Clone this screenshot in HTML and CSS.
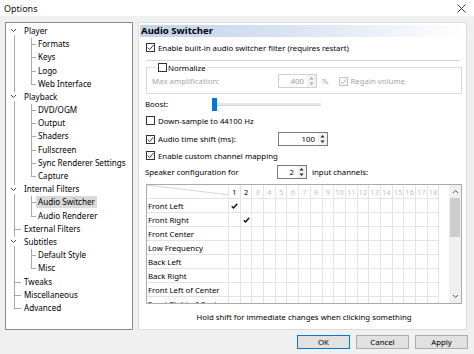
FILE: index.html
```html
<!DOCTYPE html>
<html lang="en">
<head>
    <meta charset="UTF-8">
    <title>Options</title>
    <link rel="stylesheet" href="styles.css">
</head>
<body>
    <div class="titlebar">
        <span class="title">Options</span>
        <svg class="close" width="9" height="9" viewBox="0 0 9 9"><path d="M0.5 0.5L8.5 8.5M8.5 0.5L0.5 8.5" stroke="#222" stroke-width="0.9"/></svg>
    </div>

    <div class="main">
        <div class="tree">
            <div class="branch">
                <div class="node">
                    <div class="row"><span class="chev"><svg width="7" height="5" viewBox="0 0 7 5"><path d="M1 1L3.5 3.5L6 1" fill="none" stroke="#444"/></svg></span><span class="label">Player</span></div>
                    <div class="kids">
                        <div class="row"><span class="label">Formats</span></div>
                        <div class="row"><span class="label">Keys</span></div>
                        <div class="row"><span class="label">Logo</span></div>
                        <div class="row"><span class="label">Web Interface</span></div>
                    </div>
                </div>
                <div class="node">
                    <div class="row"><span class="chev"><svg width="7" height="5" viewBox="0 0 7 5"><path d="M1 1L3.5 3.5L6 1" fill="none" stroke="#444"/></svg></span><span class="label">Playback</span></div>
                    <div class="kids">
                        <div class="row"><span class="label">DVD/OGM</span></div>
                        <div class="row"><span class="label">Output</span></div>
                        <div class="row"><span class="label">Shaders</span></div>
                        <div class="row"><span class="label">Fullscreen</span></div>
                        <div class="row"><span class="label">Sync Renderer Settings</span></div>
                        <div class="row"><span class="label">Capture</span></div>
                    </div>
                </div>
                <div class="node">
                    <div class="row"><span class="chev"><svg width="7" height="5" viewBox="0 0 7 5"><path d="M1 1L3.5 3.5L6 1" fill="none" stroke="#444"/></svg></span><span class="label">Internal Filters</span></div>
                    <div class="kids">
                        <div class="row"><span class="label selected">Audio Switcher</span></div>
                        <div class="row"><span class="label">Audio Renderer</span></div>
                    </div>
                </div>
                <div class="node leaf">
                    <div class="row"><span class="label">External Filters</span></div>
                </div>
                <div class="node">
                    <div class="row"><span class="chev"><svg width="7" height="5" viewBox="0 0 7 5"><path d="M1 1L3.5 3.5L6 1" fill="none" stroke="#444"/></svg></span><span class="label">Subtitles</span></div>
                    <div class="kids">
                        <div class="row"><span class="label">Default Style</span></div>
                        <div class="row"><span class="label">Misc</span></div>
                    </div>
                </div>
                <div class="node leaf">
                    <div class="row"><span class="label">Tweaks</span></div>
                </div>
                <div class="node leaf">
                    <div class="row"><span class="label">Miscellaneous</span></div>
                </div>
                <div class="node leaf">
                    <div class="row"><span class="label">Advanced</span></div>
                </div>
            </div>
        </div>

        <div class="page">
            <div class="page-title">Audio Switcher</div>
            <div class="page-body">
                <div class="line first">
                    <svg class="cb" viewBox="0 0 9 9"><rect x="0.5" y="0.5" width="8" height="8" fill="#fff" stroke="#333"/><path d="M1.8 4.6L3.7 6.6L7.4 2.2" fill="none" stroke="#333"/></svg>
                    <span>Enable built-in audio switcher filter (requires restart)</span>
                </div>
                <div class="separator"></div>

                <div class="group">
                    <div class="legend">
                        <svg class="cb" viewBox="0 0 9 9"><rect x="0.5" y="0.5" width="8" height="8" fill="#fff" stroke="#333"/></svg>
                        <span>Normalize</span>
                    </div>
                    <div class="group-row">
                        <span class="disabled amp-label">Max amplification:</span>
                        <span class="spin spin-400 off">
                            <span class="spin-val">400</span>
                            <span class="spin-btns">
                                <svg viewBox="0 0 8 6"><path d="M2 4.5L4 2L6 4.5Z" fill="#aaa"/></svg>
                                <svg viewBox="0 0 8 6"><path d="M2 1.5L4 4L6 1.5Z" fill="#aaa"/></svg>
                            </span>
                        </span>
                        <span class="disabled pct">%</span>
                        <span class="regain">
                            <svg class="cb" viewBox="0 0 9 9"><rect x="0.5" y="0.5" width="8" height="8" fill="#fff" stroke="#c4c4c4"/><path d="M1.8 4.6L3.7 6.6L7.4 2.2" fill="none" stroke="#b0b0b0"/></svg>
                            <span class="disabled">Regain volume</span>
                        </span>
                    </div>
                </div>

                <div class="line boost">
                    <span class="boost-label">Boost:</span>
                    <span class="slider"><span class="thumb"></span><span class="track"></span></span>
                </div>

                <div class="line down">
                    <svg class="cb" viewBox="0 0 9 9"><rect x="0.5" y="0.5" width="8" height="8" fill="#fff" stroke="#333"/></svg>
                    <span>Down-sample to 44100 Hz</span>
                </div>

                <div class="line shift">
                    <svg class="cb" viewBox="0 0 9 9"><rect x="0.5" y="0.5" width="8" height="8" fill="#fff" stroke="#333"/><path d="M1.8 4.6L3.7 6.6L7.4 2.2" fill="none" stroke="#333"/></svg>
                    <span class="shift-label">Audio time shift (ms):</span>
                    <span class="spin spin-100">
                        <span class="spin-val">100</span>
                        <span class="spin-btns">
                            <svg viewBox="0 0 8 6"><path d="M2 4.5L4 2L6 4.5Z" fill="#222"/></svg>
                            <svg viewBox="0 0 8 6"><path d="M2 1.5L4 4L6 1.5Z" fill="#222"/></svg>
                        </span>
                    </span>
                </div>

                <div class="line mapping">
                    <svg class="cb" viewBox="0 0 9 9"><rect x="0.5" y="0.5" width="8" height="8" fill="#fff" stroke="#333"/><path d="M1.8 4.6L3.7 6.6L7.4 2.2" fill="none" stroke="#333"/></svg>
                    <span>Enable custom channel mapping</span>
                </div>

                <div class="line speakers">
                    <span class="speaker-label">Speaker configuration for</span>
                    <span class="spin spin-2">
                        <span class="spin-val">2</span>
                        <span class="spin-btns">
                            <svg viewBox="0 0 8 6"><path d="M2 4.5L4 2L6 4.5Z" fill="#222"/></svg>
                            <svg viewBox="0 0 8 6"><path d="M2 1.5L4 4L6 1.5Z" fill="#222"/></svg>
                        </span>
                    </span>
                    <span class="channels">input channels:</span>
                </div>

                <div class="grid-box">
                    <div class="grid">
                        <div class="cell corner"><svg width="100%" height="100%" viewBox="0 0 100 100" preserveAspectRatio="none"><path d="M0 0L100 75" stroke="#d6d6d6" stroke-width="1" vector-effect="non-scaling-stroke"/></svg></div>
                        <div class="cell head on">1</div><div class="cell head on">2</div>
                        <div class="cell head">3</div><div class="cell head">4</div><div class="cell head">5</div>
                        <div class="cell head">6</div><div class="cell head">7</div><div class="cell head">8</div>
                        <div class="cell head">9</div><div class="cell head">10</div><div class="cell head">11</div>
                        <div class="cell head">12</div><div class="cell head">13</div><div class="cell head">14</div>
                        <div class="cell head">15</div><div class="cell head">16</div><div class="cell head">17</div>
                        <div class="cell head">18</div>
                    </div>
                    <div class="vscroll">
                        <span class="arrow"><svg width="7" height="5" viewBox="0 0 7 5"><path d="M1 4L3.5 1.5L6 4" fill="none" stroke="#555"/></svg></span>
                        <span class="scroll-thumb"></span>
                        <span class="scroll-gap"></span>
                        <span class="arrow"><svg width="7" height="5" viewBox="0 0 7 5"><path d="M1 1L3.5 3.5L6 1" fill="none" stroke="#555"/></svg></span>
                    </div>
                </div>

                <div class="hint">Hold shift for immediate changes when clicking something</div>
            </div>
        </div>
    </div>

    <div class="buttons">
        <button class="btn default">OK</button>
        <button class="btn">Cancel</button>
        <button class="btn">Apply</button>
    </div>

    <script>
        const rows = ["Front Left", "Front Right", "Front Center", "Low Frequency", "Back Left",
                      "Back Right", "Front Left of Center", "Front Right of Center"];
        const grid = document.querySelector(".grid");
        const check = '<svg width="7" height="6" viewBox="0 0 7 6"><path d="M0.8 3.2L2.6 5L6.2 0.8" fill="none" stroke="#111" stroke-width="1.4"/></svg>';
        rows.forEach((name, r) => {
            const label = document.createElement("div");
            label.className = "cell row-name";
            label.textContent = name;
            grid.appendChild(label);
            for (let c = 0; c < 18; c++) {
                const cell = document.createElement("div");
                cell.className = "cell";
                if (r < 2 && c === r) cell.innerHTML = check;
                grid.appendChild(cell);
            }
        });
    </script>
</body>
</html>
```

FILE: styles.css
```css
body {
    margin: 0;
    width: 474px;
    height: 354px;
    overflow: hidden;
    background-color: #f0f0f0;
    font-family: "Noto Sans", "Open Sans", sans-serif;
    font-size: 7.8px;
    color: #000;
}
.titlebar {
    height: 16px;
    background: #fff;
    display: flex;
    align-items: center;
    justify-content: space-between;
    padding: 0 8px 0 4px;
}
.title {
    font-size: 9px;
    color: #111;
}
.close {
    display: block;
}
.main {
    display: flex;
    gap: 5px;
    padding: 6px 7px 0 5px;
    height: 308px;
}

/* tree */
.tree {
    width: 128px;
    box-sizing: border-box;
    border: 1px solid #8c8c8c;
    background: #fff;
    padding-top: 1.4px;
    font-size: 8.1px;
}
.branch, .kids, .row {
    position: relative;
}
.branch::before {
    content: '';
    position: absolute;
    left: 8px;
    top: 6.6px;
    bottom: 6.6px;
    border-left: 1px solid #a8a8a8;
}
.row {
    height: 13.2px;
    display: flex;
    align-items: center;
    padding-left: 18px;
    white-space: nowrap;
}
.leaf > .row::before {
    content: '';
    position: absolute;
    left: 8px;
    width: 7px;
    top: 50%;
    border-top: 1px solid #a8a8a8;
}
.chev {
    position: absolute;
    left: 3px;
    top: 2px;
    width: 9px;
    height: 9px;
    background: #fff;
    display: flex;
    align-items: center;
    justify-content: center;
}
.kids::before {
    content: '';
    position: absolute;
    left: 25px;
    top: 0;
    bottom: 6.6px;
    border-left: 1px solid #a8a8a8;
}
.kids .row {
    padding-left: 30px;
}
.kids .row::before {
    content: '';
    position: absolute;
    left: 25px;
    width: 5px;
    top: 50%;
    border-top: 1px solid #a8a8a8;
}
.label {
    padding: 0 2px;
    line-height: 12px;
}
.row > .label {
    margin-left: -2px;
}
.kids .row > .label {
    margin-left: 0;
}
.selected {
    background: #d9d9d9;
}

/* page */
.page {
    flex: 1;
    box-sizing: border-box;
    background: #fff;
    border: 1px solid #dcdcdc;
    padding: 2px 1px 0 1px;
}
.page-title {
    height: 12px;
    line-height: 12px;
    padding-left: 1px;
    font-size: 9.6px;
    font-weight: bold;
    background: linear-gradient(to right, #c2d3ea, #d8e3f2 45%, #fbfcfe 95%, #fff);
}
.page-body {
    padding: 0 3px 0 6px;
}
.line {
    display: flex;
    align-items: center;
    height: 13px;
    white-space: nowrap;
}
.cb {
    width: 9px;
    height: 9px;
    flex-shrink: 0;
    margin-right: 3px;
}
.first {
    margin-top: 4px;
}
.separator {
    margin: 6px 2px 0 0;
    border-top: 1px solid #d4d4d4;
}
.group {
    margin-top: 6px;
    border: 1px solid #dcdcdc;
    padding-bottom: 5px;
}
.legend {
    display: flex;
    align-items: center;
    width: max-content;
    height: 13px;
    margin: -7px 0 0 9px;
    padding: 0 2px;
    background: #fff;
}
.legend .cb {
    margin-right: 1px;
}
.group-row {
    display: flex;
    align-items: center;
    height: 14px;
    padding-left: 5px;
}
.disabled {
    color: #a6a6a6;
}
.amp-label {
    width: 126px;
}
.pct {
    margin-left: 5px;
}
.regain {
    display: flex;
    align-items: center;
    margin-left: 11px;
}
.regain .cb {
    margin-right: 2px;
}

.spin {
    display: flex;
    height: 14px;
    box-sizing: border-box;
    border: 1px solid #7a7a7a;
    background: #fff;
}
.spin.off {
    border-color: #d0d0d0;
    color: #9a9a9a;
}
.spin-val {
    flex: 1;
    text-align: right;
    padding-right: 3px;
    line-height: 12px;
}
.spin-btns {
    width: 9px;
    display: flex;
    flex-direction: column;
    justify-content: space-between;
    background: #f2f2f2;
}
.spin-btns svg {
    display: block;
    width: 9px;
    height: 6px;
}
.spin-400 {
    width: 39px;
}
.spin-100 {
    width: 50px;
}
.spin-2 {
    width: 30px;
}

.boost {
    margin-top: 3px;
    height: 14px;
}
.boost-label {
    width: 67px;
    margin-left: -1px;
}
.slider {
    display: flex;
    align-items: center;
    width: 109px;
    height: 14px;
}
.thumb {
    width: 5px;
    height: 13px;
    background: #0078d7;
}
.track {
    flex: 1;
    height: 2px;
    background: #e6e6e6;
    border-bottom: 1px solid #d8d8d8;
}
.down {
    margin-top: 3px;
}
.shift {
    margin-top: 5px;
    height: 14px;
}
.shift-label {
    width: 120px;
}
.mapping {
    margin-top: 3px;
}
.speakers {
    margin-top: 3px;
    height: 14px;
}
.speaker-label {
    width: 132px;
    margin-left: -1px;
}
.channels {
    margin-left: 5px;
}

/* channel grid */
.grid-box {
    margin-top: 5px;
    height: 120px;
    box-sizing: border-box;
    border: 1px solid #ababab;
    display: flex;
    overflow: hidden;
}
.grid {
    flex: 1;
    display: grid;
    grid-template-columns: 82px repeat(18, 11.7px);
    grid-auto-rows: 14px;
    align-content: start;
}
.cell {
    box-sizing: border-box;
    border-right: 1px solid #e4e4e4;
    border-bottom: 1px solid #e4e4e4;
    display: flex;
    align-items: center;
    justify-content: center;
    white-space: nowrap;
    overflow: hidden;
}
.corner svg {
    display: block;
}
.head {
    color: #c4c4c4;
    font-size: 7.5px;
}
.head.on {
    color: #000;
}
.row-name {
    justify-content: flex-start;
    padding-left: 1px;
}
.vscroll {
    width: 12px;
    background: #f0f0f0;
    display: flex;
    flex-direction: column;
    align-items: center;
}
.arrow {
    height: 13px;
    display: flex;
    align-items: center;
    justify-content: center;
}
.scroll-thumb {
    width: 10px;
    height: 39px;
    background: #cdcdcd;
}
.scroll-gap {
    flex: 1;
}
.hint {
    margin-top: 7px;
    height: 12px;
    line-height: 12px;
    text-align: center;
}

/* buttons */
.buttons {
    display: flex;
    justify-content: flex-end;
    gap: 6px;
    padding: 5px 6px 0 0;
}
.btn {
    width: 53px;
    height: 14px;
    padding: 0;
    font-family: "Noto Sans", "Open Sans", sans-serif;
    font-size: 7.8px;
    line-height: 12px;
    color: #000;
    background: #e1e1e1;
    border: 1px solid #adadad;
}
.btn.default {
    border-color: #0078d7;
}
```
